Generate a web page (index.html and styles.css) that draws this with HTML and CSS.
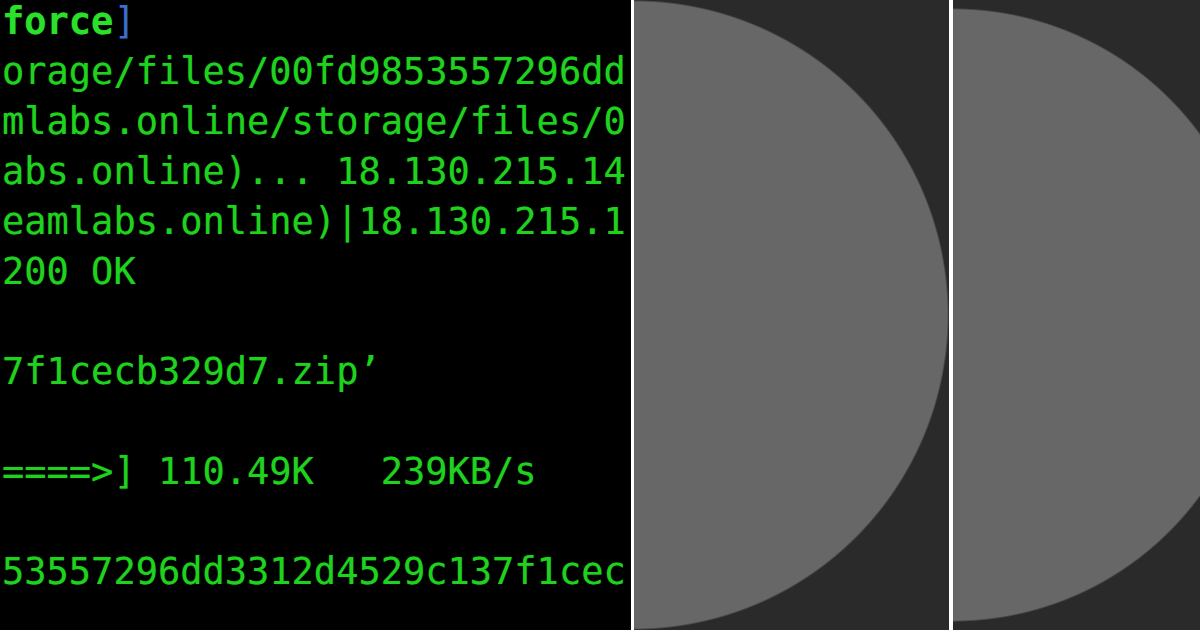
FILE: index.html
```html
<!DOCTYPE html>
<html lang="en">
<head>
<meta charset="utf-8">
<title>Terminal and shapes</title>
<link rel="stylesheet" href="styles.css">
</head>
<body>
<div class="strip">
  <section class="terminal">
<pre class="out"><b class="cmd">force</b><span class="bracket">]</span>
orage/files/00fd9853557296dd
mlabs.online/storage/files/0
abs.online)... 18.130.215.14
eamlabs.online)|18.130.215.1
200 OK

7f1cecb329d7.zip’

====>] 110.49K   239KB/s

53557296dd3312d4529c137f1cec</pre>
  </section>
  <div class="divider"></div>
  <section class="panel panel-a"></section>
  <div class="divider divider-wide"></div>
  <section class="panel panel-b"></section>
</div>
</body>
</html>
```
FILE: styles.css
```css
html, body {
  margin: 0;
  padding: 0;
  width: 1200px;
  height: 630px;
  overflow: hidden;
  background: #ffffff;
}

.strip {
  display: flex;
  width: 1200px;
  height: 630px;
}

.terminal {
  width: 631px;
  height: 630px;
  flex: none;
  background: #000000;
  overflow: hidden;
}

.out {
  margin: -3px 0 0 0;
  padding: 0 0 0 2px;
  font-family: "DejaVu Sans Mono", "Liberation Mono", monospace;
  font-size: 37px;
  line-height: 50px;
  color: #1ed21e;
  text-shadow: 0 0 1px rgba(30, 210, 30, 0.6);
  white-space: pre;
  overflow: hidden;
  width: 629px;
}

.cmd {
  font-weight: bold;
  color: #2be02b;
}

.bracket {
  color: #3a6ed4;
  text-shadow: none;
}

.divider {
  width: 3px;
  flex: none;
  background: #ffffff;
}

.divider-wide {
  width: 4px;
}

.panel {
  height: 630px;
  background-color: #2a2a2a;
}

.panel-a {
  width: 315px;
  flex: none;
  background-image: radial-gradient(circle 315px at 0 50%, #676767 99.4%, #2a2a2a 100%);
}

.panel-b {
  flex: 1;
  background-image: radial-gradient(circle 307px at 0 50%, #676767 99.4%, #2a2a2a 100%);
}
```
